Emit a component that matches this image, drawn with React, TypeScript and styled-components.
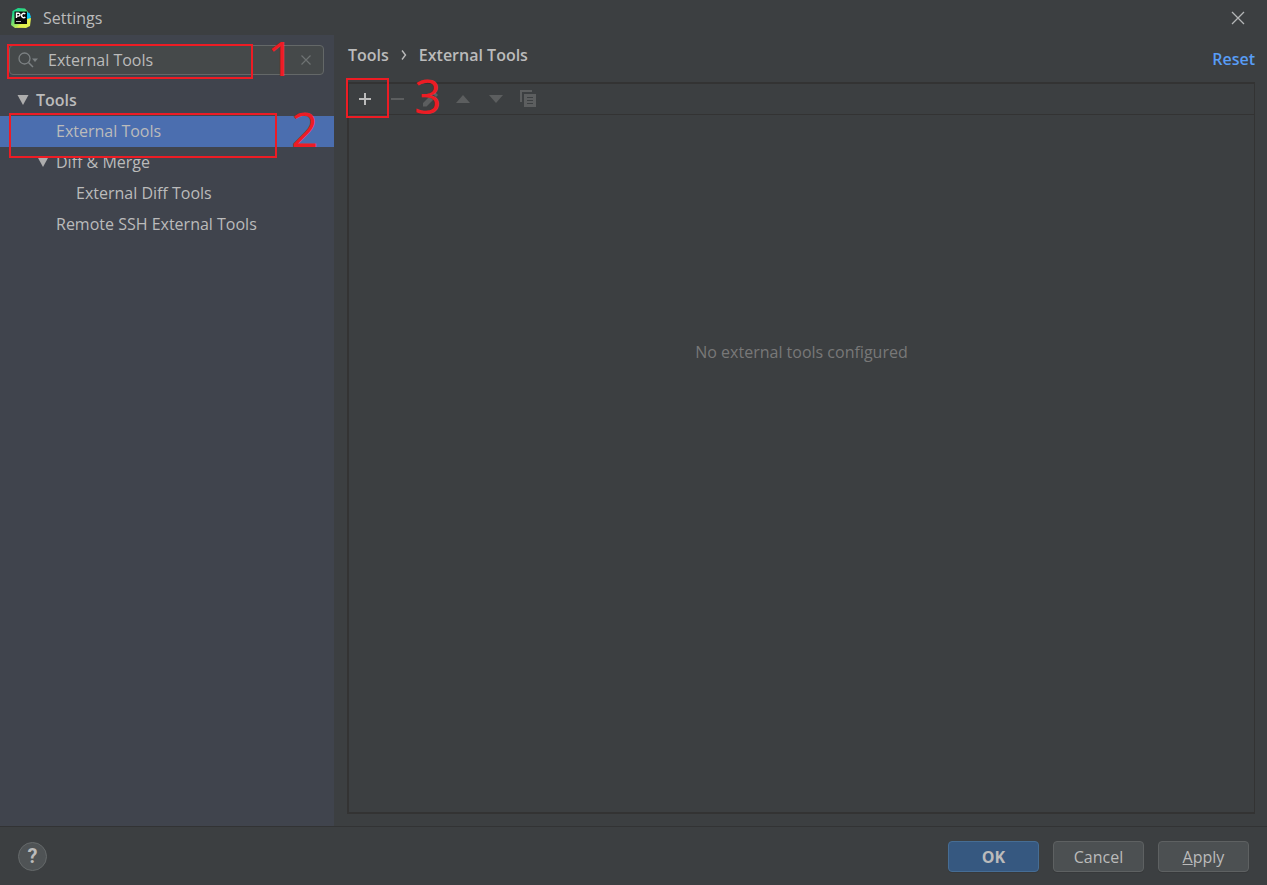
import React, { useState } from 'react';
import styled, { createGlobalStyle, css } from 'styled-components';

const GlobalStyle = createGlobalStyle`
  *, *::before, *::after { box-sizing: border-box; }
  body { margin: 0; background: #3c3f41; }
  button, input {
    font: inherit;
    color: inherit;
    margin: 0;
    padding: 0;
    border: 0;
    background: none;
  }
  h1, h2, p, ul, ol { margin: 0; padding: 0; font: inherit; list-style: none; }
  svg { display: block; flex: none; }
`;

const Dialog = styled.div`
  display: flex;
  flex-direction: column;
  min-height: 100vh;
  background: #3c3f41;
  color: #bbbbbb;
  font-family: "Open Sans", "Noto Sans", sans-serif;
  font-size: 16px;
  line-height: 20px;
`;

const TitleBar = styled.header`
  display: flex;
  align-items: center;
  gap: 11px;
  height: 35px;
  padding: 0 22px 0 10px;
`;

const Title = styled.h1`
  flex: 1;
`;

const IconButton = styled.button`
  display: flex;
  align-items: center;
  justify-content: center;
`;

const Body = styled.div`
  flex: 1;
  display: flex;
`;

const Sidebar = styled.aside`
  flex: none;
  width: 334px;
  padding-top: 10px;
  background: #40444d;
`;

const SearchField = styled.div`
  position: relative;
  display: flex;
  align-items: center;
  gap: 10px;
  height: 30px;
  margin: 0 10px 10px 9px;
  padding: 0 12px 0 8px;
  border: 1px solid #646868;
  border-radius: 4px;
  background: #45494a;
`;

const SearchInput = styled.input`
  flex: 1;
  min-width: 0;
  outline: none;
`;

const TreeRow = styled.button<{ $level: number; $selected?: boolean; $bold?: boolean }>`
  display: flex;
  align-items: center;
  gap: 7px;
  width: 100%;
  height: 31px;
  padding-bottom: 2px;
  padding-left: ${(p) => 17 + p.$level * 20}px;
  text-align: left;
  white-space: nowrap;
  font-weight: ${(p) => (p.$bold ? 600 : 400)};
  background: ${(p) => (p.$selected ? '#4b6eaf' : 'transparent')};
`;

const TreeItem = styled.li`
  position: relative;
`;

const ArrowSlot = styled.span`
  flex: none;
  width: 12px;
`;

const Content = styled.main`
  flex: 1;
  min-width: 0;
  display: flex;
  flex-direction: column;
  padding: 10px 12px 12px 13px;
`;

const ContentHeader = styled.div`
  display: flex;
  align-items: flex-start;
  justify-content: space-between;
  height: 37px;
  padding-left: 1px;
  font-weight: 600;
`;

const Breadcrumbs = styled.ol`
  display: flex;
  align-items: center;
  gap: 12px;
`;

const Crumb = styled.li`
  display: flex;
  align-items: center;
  gap: 12px;
`;

const ResetLink = styled.a`
  padding-top: 4px;
  color: #589df6;
  text-decoration: none;
`;

const Panel = styled.section`
  flex: 1;
  display: flex;
  flex-direction: column;
  border: 2px solid #333333;
  border-right-width: 1px;
`;

const Toolbar = styled.div`
  display: flex;
  align-items: center;
  gap: 1px;
  height: 31px;
  padding-left: 1px;
  border-bottom: 1px solid #333333;
`;

const ToolButton = styled(IconButton)`
  position: relative;
  width: 32px;
  height: 30px;
  color: #5c5e5f;

  &:first-child {
    width: 30px;
    color: #bbbbbb;
  }
`;

const EmptyText = styled.p`
  padding-top: 227px;
  text-align: center;
  color: #787878;
`;

const Footer = styled.footer`
  display: flex;
  align-items: center;
  height: 59px;
  padding: 0 18px;
  border-top: 1px solid #323334;
`;

const HelpButton = styled.button`
  width: 29px;
  height: 29px;
  margin-right: auto;
  border: 1px solid #65696a;
  border-radius: 50%;
  background: #4f5355;
  font-family: Roboto, sans-serif;
  font-size: 20px;
  font-weight: 700;
`;

const DialogButton = styled.button<{ $primary?: boolean }>`
  width: 91px;
  height: 31px;
  padding-top: 2px;
  border: 1px solid #5e6162;
  border-radius: 4px;
  background: #4c5052;
  box-shadow: 0 1px 0 #37393b;
  ${(p) =>
    p.$primary &&
    css`
      border-color: #466d94;
      background: #365880;
      font-weight: 700;
    `}
`;

const ButtonRow = styled.div`
  display: flex;
  gap: 14px;
`;

/* Red callout frames and step numbers laid over the dialog */
const Callout = styled.span<{ $x: number; $y: number; $w: number; $h: number }>`
  position: absolute;
  z-index: 2;
  left: ${(p) => p.$x}px;
  top: ${(p) => p.$y}px;
  width: ${(p) => p.$w}px;
  height: ${(p) => p.$h}px;
  border: 2px solid #ed1c24;
  pointer-events: none;
`;

const Step = styled.span<{ $x: number; $y: number }>`
  position: absolute;
  z-index: 2;
  left: ${(p) => p.$x}px;
  top: ${(p) => p.$y}px;
  color: #ed1c24;
  font-size: 48px;
  font-weight: 400;
  line-height: 48px;
  pointer-events: none;
`;

const AppLogo = () => (
  <svg width="22" height="22" viewBox="0 0 22 22" aria-hidden="true">
    <defs>
      <linearGradient id="logo-main" x1="0" y1="0" x2="0.6" y2="1">
        <stop offset="0.3" stopColor="#21d789" />
        <stop offset="0.7" stopColor="#8ee465" />
        <stop offset="1" stopColor="#fcf84a" />
      </linearGradient>
    </defs>
    <path d="M2.500 4 8 1l7 .5L18 5l-1 15-12 1-4-3z" fill="url(#logo-main)" />
    <path d="m16 5 3.500 1L21 10l-3 5-5-3z" fill="#07c3f2" />
    <path d="m17 12 4-1-1 8-4 2-9-.5z" fill="#e4f24e" />
    <rect x="4.500" y="4.500" width="12.500" height="12.500" fill="#080808" />
    <path d="M6.500 11V6.200h2a1.450 1.450 0 0 1 0 2.900h-2M15.300 6.900a2.200 2.200 0 1 0 0 3.200" fill="none" stroke="#fff" strokeWidth="1.400" />
    <path d="M6 14.500h5" stroke="#bbb" strokeWidth="1" />
  </svg>
);

const CloseIcon = () => (
  <svg width="14" height="14" viewBox="0 0 14 14" aria-hidden="true">
    <path d="m1 1 12 12M13 1 1 13" stroke="#b4b6b7" strokeWidth="1.300" />
  </svg>
);

const SearchIcon = () => (
  <svg width="20" height="18" viewBox="0 0 20 18" aria-hidden="true">
    <circle cx="6.500" cy="7.500" r="5.500" fill="none" stroke="#7c8183" strokeWidth="1.300" />
    <path d="m10.500 11.500 4.500 4.500" stroke="#7c8183" strokeWidth="1.500" />
    <path d="M14 7.500h6l-3 3.500z" fill="#7c8183" />
  </svg>
);

const ClearIcon = () => (
  <svg width="10" height="10" viewBox="0 0 10 10" aria-hidden="true">
    <path d="m.5.5 9 9M9.500.5l-9 9" stroke="#6e7273" strokeWidth="1.200" />
  </svg>
);

const ExpandedIcon = () => (
  <svg width="12" height="10" viewBox="0 0 12 10" aria-hidden="true">
    <path d="M.5 0h11L6 10z" fill="#adadad" />
  </svg>
);

const CrumbIcon = () => (
  <svg width="6" height="10" viewBox="0 0 6 10" aria-hidden="true">
    <path d="m1 .5 3.500 4.500L1 9.500" fill="none" stroke="#bbbbbb" strokeWidth="1.400" />
  </svg>
);

const toolIcons = [
  { label: 'Add', shape: <path d="M8 3h2v5h5v2h-5v5H8v-5H3V8h5z" /> },
  { label: 'Remove', shape: <path d="M3 8h13v2H3z" /> },
  { label: 'Edit', shape: <path d="m2 13 8.500-8.500 3.500 3.500L5.500 16.500H2zM11.500 3.500l2-2 3.500 3.500-2 2z" /> },
  { label: 'Move up', shape: <path d="m2 13 7-8 7 8z" /> },
  { label: 'Move down', shape: <path d="m2 5 7 8 7-8z" /> },
  {
    label: 'Copy',
    shape: (
      <path
        fillRule="evenodd"
        d="M0 0h12v2H2v10H0zM4 4h12v13H4zM7 7v1h6V7zM7 10v1h6V10zM7 13v1h6V13z"
      />
    ),
  },
];

const rows = [
  { label: 'Tools', level: 0, expanded: true, bold: true },
  { label: 'External Tools', level: 1 },
  { label: 'Diff & Merge', level: 1, expanded: true },
  { label: 'External Diff Tools', level: 2 },
  { label: 'Remote SSH External Tools', level: 1 },
];

export default function App() {
  const [query, setQuery] = useState('External Tools');
  const [selected, setSelected] = useState('External Tools');

  return (
    <>
      <GlobalStyle />
      <Dialog>
        <TitleBar>
          <AppLogo />
          <Title>Settings</Title>
          <IconButton type="button" aria-label="Close">
            <CloseIcon />
          </IconButton>
        </TitleBar>
        <Body>
          <Sidebar>
            <SearchField>
              <SearchIcon />
              <SearchInput
                type="text"
                aria-label="Search settings"
                value={query}
                onChange={(e) => setQuery(e.target.value)}
              />
              <IconButton type="button" aria-label="Clear search" onClick={() => setQuery('')}>
                <ClearIcon />
              </IconButton>
              <Callout $x={-3} $y={-2} $w={246} $h={35} />
              <Step $x={257} $y={-12}>1</Step>
            </SearchField>
            <ul>
              {rows.map((row) => (
                <TreeItem key={row.label}>
                  <TreeRow
                    type="button"
                    $level={row.level}
                    $bold={row.bold}
                    $selected={row.label === selected}
                    onClick={() => setSelected(row.label)}
                  >
                    <ArrowSlot>{row.expanded && <ExpandedIcon />}</ArrowSlot>
                    {row.label}
                  </TreeRow>
                  {row.label === 'External Tools' && (
                    <>
                      <Callout $x={9} $y={-3} $w={268} $h={45} />
                      <Step $x={291} $y={-11}>2</Step>
                    </>
                  )}
                </TreeItem>
              ))}
            </ul>
          </Sidebar>
          <Content>
            <ContentHeader>
              <Breadcrumbs>
                <Crumb>
                  Tools
                  <CrumbIcon />
                </Crumb>
                <Crumb>External Tools</Crumb>
              </Breadcrumbs>
              <ResetLink href="#reset">Reset</ResetLink>
            </ContentHeader>
            <Panel>
              <Toolbar>
                {toolIcons.map((tool) => (
                  <ToolButton key={tool.label} type="button" aria-label={tool.label}>
                    <svg width="18" height="18" viewBox="0 0 18 18" fill="currentColor" aria-hidden="true">
                      {tool.shape}
                    </svg>
                    {tool.label === 'Add' && (
                      <>
                        <Callout $x={-4} $y={-6} $w={43} $h={40} />
                        <Step $x={64} $y={-12}>3</Step>
                      </>
                    )}
                  </ToolButton>
                ))}
              </Toolbar>
              <EmptyText>No external tools configured</EmptyText>
            </Panel>
          </Content>
        </Body>
        <Footer>
          <HelpButton type="button" aria-label="Help">?</HelpButton>
          <ButtonRow>
            <DialogButton type="button" $primary>OK</DialogButton>
            <DialogButton type="button">Cancel</DialogButton>
            <DialogButton type="button">
              <u>A</u>pply
            </DialogButton>
          </ButtonRow>
        </Footer>
      </Dialog>
    </>
  );
}
